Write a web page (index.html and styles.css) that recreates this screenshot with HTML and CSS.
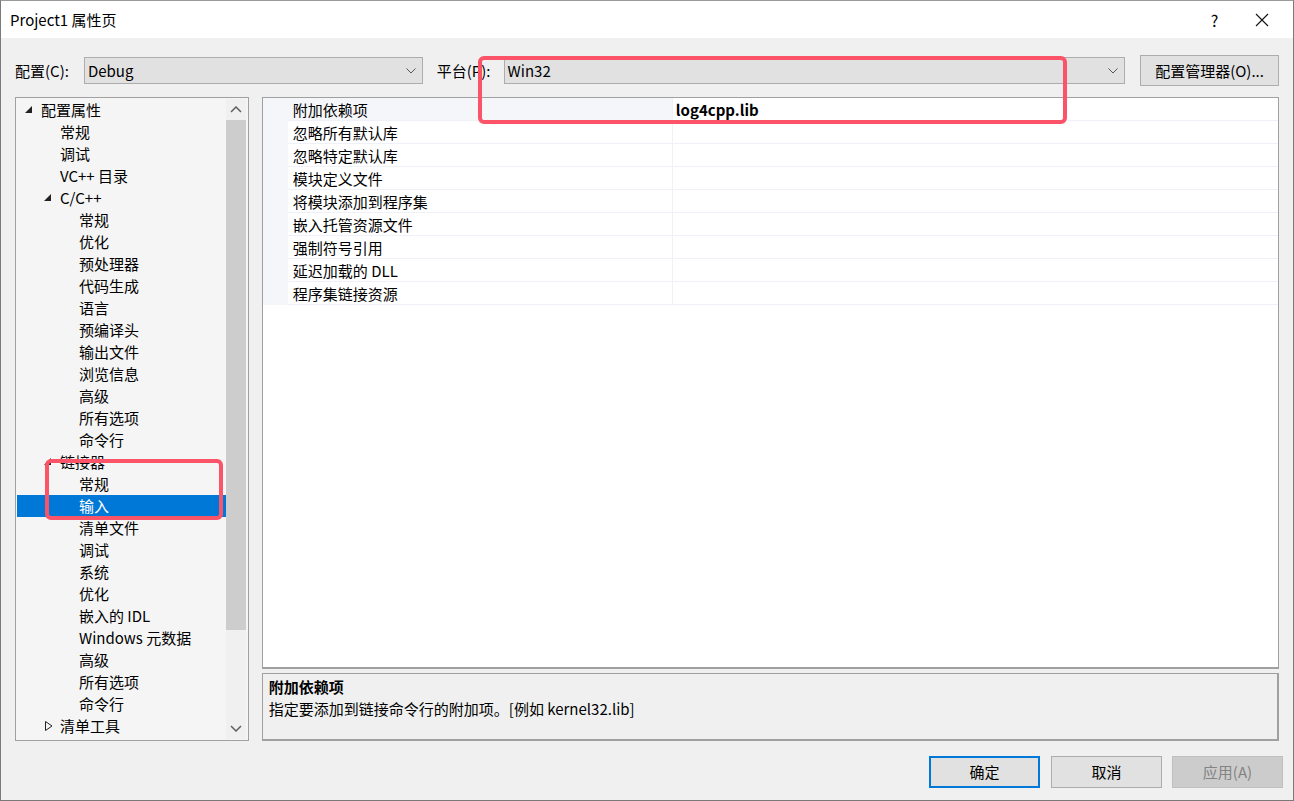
FILE: index.html
```html
<!DOCTYPE html>
<html lang="zh-CN">
<head>
<meta charset="utf-8">
<title>Project1 属性页</title>
<link rel="stylesheet" href="styles.css">
</head>
<body>
<div class="window">
  <div class="titlebar">
    <span class="title">Project1 属性页</span>
    <div class="tb-actions">
      <span class="help">?</span>
      <svg class="close" width="14" height="14" viewBox="0 0 14 14"><path d="M1 1L13 13M13 1L1 13" stroke="#111" stroke-width="1.1" fill="none"/></svg>
    </div>
  </div>
  <div class="content">
    <div class="toprow">
      <span class="lbl lbl1">配置(C):</span>
      <div class="combo combo1"><span>Debug</span><svg class="chev" width="10" height="6" viewBox="0 0 10 6"><path d="M0.5 0.5L5 5L9.5 0.5" stroke="#555" stroke-width="1" fill="none"/></svg></div>
      <span class="lbl lbl2">平台(P):</span>
      <div class="combo combo2"><span>Win32</span><svg class="chev" width="10" height="6" viewBox="0 0 10 6"><path d="M0.5 0.5L5 5L9.5 0.5" stroke="#555" stroke-width="1" fill="none"/></svg></div>
      <button class="btn mgr">配置管理器(O)...</button>
    </div>
    <div class="main">
      <div class="tree">
        <div class="tree-list">
          <div class="row l0"><svg class="exp" width="8" height="8" viewBox="0 0 8 8"><polygon points="7,0 7,7 0,7" fill="#222"/></svg>配置属性</div>
          <div class="row l1">常规</div>
          <div class="row l1">调试</div>
          <div class="row l1">VC++ 目录</div>
          <div class="row l1"><svg class="exp" width="8" height="8" viewBox="0 0 8 8"><polygon points="7,0 7,7 0,7" fill="#222"/></svg>C/C++</div>
          <div class="row l2">常规</div>
          <div class="row l2">优化</div>
          <div class="row l2">预处理器</div>
          <div class="row l2">代码生成</div>
          <div class="row l2">语言</div>
          <div class="row l2">预编译头</div>
          <div class="row l2">输出文件</div>
          <div class="row l2">浏览信息</div>
          <div class="row l2">高级</div>
          <div class="row l2">所有选项</div>
          <div class="row l2">命令行</div>
          <div class="row l1"><svg class="exp" width="8" height="8" viewBox="0 0 8 8"><polygon points="7,0 7,7 0,7" fill="#222"/></svg>链接器</div>
          <div class="row l2">常规</div>
          <div class="row l2 sel">输入</div>
          <div class="row l2">清单文件</div>
          <div class="row l2">调试</div>
          <div class="row l2">系统</div>
          <div class="row l2">优化</div>
          <div class="row l2">嵌入的 IDL</div>
          <div class="row l2">Windows 元数据</div>
          <div class="row l2">高级</div>
          <div class="row l2">所有选项</div>
          <div class="row l2">命令行</div>
          <div class="row l1"><svg class="col" width="8" height="10" viewBox="0 0 8 10"><polygon points="0.5,0.5 7,5 0.5,9.5" fill="none" stroke="#222" stroke-width="1"/></svg>清单工具</div>
        </div>
        <div class="vscroll">
          <div class="sb-btn"><svg width="12" height="7" viewBox="0 0 12 7"><path d="M1 6L6 1L11 6" stroke="#606060" stroke-width="1.5" fill="none"/></svg></div>
          <div class="sb-thumb"></div>
          <div class="sb-track"></div>
          <div class="sb-btn"><svg width="12" height="7" viewBox="0 0 12 7"><path d="M1 1L6 6L11 1" stroke="#606060" stroke-width="1.5" fill="none"/></svg></div>
        </div>
      </div>
      <div class="rightcol">
        <div class="grid">
          <div class="prow selrow"><div class="margin"></div><div class="pname">附加依赖项</div><div class="pval bold">log4cpp.lib</div></div>
          <div class="prow"><div class="margin"></div><div class="pname">忽略所有默认库</div><div class="pval"></div></div>
          <div class="prow"><div class="margin"></div><div class="pname">忽略特定默认库</div><div class="pval"></div></div>
          <div class="prow"><div class="margin"></div><div class="pname">模块定义文件</div><div class="pval"></div></div>
          <div class="prow"><div class="margin"></div><div class="pname">将模块添加到程序集</div><div class="pval"></div></div>
          <div class="prow"><div class="margin"></div><div class="pname">嵌入托管资源文件</div><div class="pval"></div></div>
          <div class="prow"><div class="margin"></div><div class="pname">强制符号引用</div><div class="pval"></div></div>
          <div class="prow"><div class="margin"></div><div class="pname">延迟加载的 DLL</div><div class="pval"></div></div>
          <div class="prow"><div class="margin"></div><div class="pname">程序集链接资源</div><div class="pval"></div></div>
        </div>
        <div class="desc">
          <div class="desc-title">附加依赖项</div>
          <div class="desc-text">指定要添加到链接命令行的附加项。[例如 kernel32.lib]</div>
        </div>
      </div>
    </div>
    <div class="btnrow">
      <button class="btn dlg default">确定</button>
      <button class="btn dlg">取消</button>
      <button class="btn dlg disabled">应用(A)</button>
    </div>
  </div>
  <div class="mark mark1"></div>
  <div class="mark mark2"></div>
</div>
</body>
</html>
```
FILE: styles.css
```css
* { box-sizing: border-box; }
html, body { margin: 0; padding: 0; }
body {
  font-family: "Noto Sans CJK SC", "Noto Sans", sans-serif;
  font-size: 15px;
  color: #000;
  background: #f0f0f0;
}
.window {
  position: relative;
  width: 1294px;
  height: 801px;
  border: 1px solid #7a7a7a;
  border-top-color: #9a9a9a;
  background: #f0f0f0;
  display: flex;
  flex-direction: column;
  overflow: hidden;
}
.titlebar {
  height: 37px;
  background: #fff;
  display: flex;
  align-items: center;
  justify-content: space-between;
  padding-left: 9px;
  flex: none;
}
.title { font-size: 15px; line-height: 20px; }
.tb-actions { display: flex; align-items: center; height: 100%; }
.help { font-size: 16px; width: 57px; text-align: center; line-height: 20px; margin-right: 12px; }
.close { margin: 0 24px 0 0; }

.content {
  flex: 1;
  padding: 0 14px;
  display: flex;
  flex-direction: column;
}
.toprow {
  margin-top: 17px;
  height: 31px;
  display: flex;
  align-items: center;
  flex: none;
}
.lbl { line-height: 20px; }
.lbl1 { width: 69px; }
.lbl2 { width: 67px; }
.combo {
  height: 27px;
  background: #e1e1e1;
  border: 1px solid #adadad;
  display: flex;
  align-items: center;
  justify-content: space-between;
  padding: 0 6px 0 3px;
  line-height: 20px;
}
.combo1 { width: 339px; margin-right: 14px; }
.combo2 { width: 622px; margin-right: 15px; }
.btn {
  font-family: inherit;
  font-size: 15px;
  color: #000;
  background: #e1e1e1;
  border: 1px solid #adadad;
  padding: 0;
  line-height: 20px;
}
.mgr { width: 139px; height: 31px; }

.main {
  margin-top: 11px;
  height: 644px;
  display: flex;
  gap: 13px;
  flex: none;
}
.tree {
  width: 234px;
  height: 644px;
  border: 1px solid #a0a0a0;
  background: #f5f5f5;
  padding: 1px;
  display: flex;
}
.tree-list { width: 209px; flex: none; }
.row {
  height: 22px;
  line-height: 22px;
  white-space: nowrap;
  position: relative;
}
.l0 { padding-left: 24px; }
.l1 { padding-left: 43px; }
.l2 { padding-left: 62px; }
.row .exp { position: absolute; top: 7px; }
.l0 .exp { left: 8px; }
.l1 .exp { left: 27px; }
.row .col { position: absolute; top: 6px; left: 28px; }
.sel { background: #0078d7; color: #fff; }

.vscroll {
  width: 20px;
  flex: none;
  background: #f0f0f0;
  display: flex;
  flex-direction: column;
}
.sb-btn {
  height: 21px;
  display: flex;
  align-items: center;
  justify-content: center;
  flex: none;
}
.sb-thumb { height: 510px; background: #cdcdcd; flex: none; }
.sb-track { flex: 1; }

.rightcol {
  width: 1018px;
  display: flex;
  flex-direction: column;
  gap: 4px;
}
.grid {
  height: 572px;
  background: #fff;
  border: 1px solid #a0a0a0;
  border-bottom: 2px solid #a0a0a0;
}
.prow {
  display: flex;
  height: 23px;
  line-height: 22px;
}
.margin { width: 25px; background: #f4f6fa; flex: none; }
.pname {
  width: 385px;
  flex: none;
  padding-left: 5px;
  padding-top: 1px;
  border-bottom: 1px solid #eef1f7;
  border-right: 1px solid #eef1f7;
  white-space: nowrap;
}
.pval {
  flex: 1;
  padding-left: 3px;
  padding-top: 1px;
  border-bottom: 1px solid #eef1f7;
}
.selrow .pname { background: #f4f6fa; }
.bold { font-weight: bold; }

.desc {
  height: 68px;
  background: #f0f0f0;
  border: 1px solid #a0a0a0;
  border-bottom: 2px solid #a0a0a0;
  border-right: 2px solid #a0a0a0;
  padding: 2px 6px;
}
.desc-title { font-weight: bold; line-height: 22px; }
.desc-text { line-height: 22px; }

.btnrow {
  margin-top: 15px;
  margin-right: -4px;
  display: flex;
  justify-content: flex-end;
  gap: 11px;
}
.dlg { width: 111px; height: 32px; }
.dlg.default { border: 2px solid #0078d7; }
.dlg.disabled { background: #cccccc; border-color: #bfbfbf; color: #838383; margin-left: -1px; }

.mark {
  position: absolute;
  border: 4px solid #fb5368;
  border-radius: 6px;
  pointer-events: none;
}
.mark1 { left: 477px; top: 55px; width: 589px; height: 68px; }
.mark2 { left: 44px; top: 458px; width: 178px; height: 61px; }
```
